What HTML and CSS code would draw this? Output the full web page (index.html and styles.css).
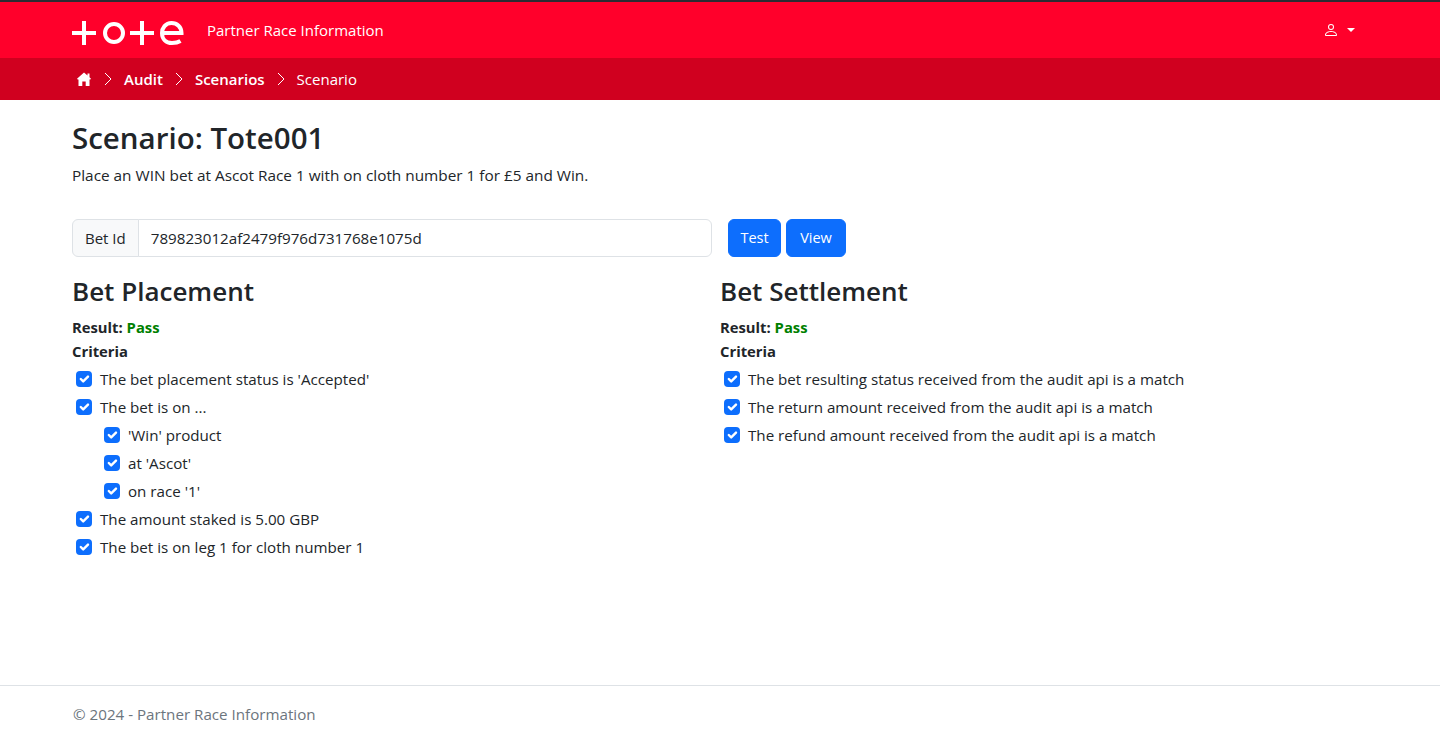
FILE: index.html
```html
<!DOCTYPE html>
<html lang="en">
<head>
  <meta charset="utf-8" />
  <meta name="viewport" content="width=device-width, initial-scale=1.0" />
  <title>Scenario - Partner Race Information</title>
  <link rel="stylesheet" href="styles.css">
</head>
<body>

  <header class="topbar">
    <div class="topbar-inner">
      <a class="brand" href="#">
        <svg class="logo" viewBox="0 0 112 24" width="112" height="24" aria-label="tote">
          <g fill="none" stroke="#fff" stroke-width="4">
            <path d="M0 12H24M12 0V24" />
            <circle cx="42" cy="12" r="9" />
            <path d="M58 12H82M70 0V24" />
            <path d="M89 12H109.500C109.500 6 105 2 99.500 2C93.500 2 90 7 90 12C90 18 94 22 100 22C103 22 106 21.500 108.500 20" />
          </g>
        </svg>
        <span class="brand-name">Partner Race Information</span>
      </a>
      <a class="user-menu" href="#">
        <svg viewBox="0 0 16 16" width="16" height="16" fill="#fff">
          <path d="M8 8a3 3 0 1 0 0-6 3 3 0 0 0 0 6zm2-3a2 2 0 1 1-4 0 2 2 0 0 1 4 0zm4 8c0 1-1 1-1 1H3s-1 0-1-1 1-4 6-4 6 3 6 4zm-1-.004c-.001-.246-.154-.986-.832-1.664C11.516 10.680 10.289 10 8 10c-2.290 0-3.516.68-4.168 1.332-.678.678-.83 1.418-.832 1.664h10z" />
        </svg>
        <span class="caret"></span>
      </a>
    </div>
  </header>

  <nav class="crumbs">
    <div class="crumbs-inner">
      <a href="#" class="crumb-home">
        <svg viewBox="0 0 14 14" width="14" height="14" fill="#fff">
          <path d="M7 0.500L10.500 3.500V1.500H12.500V5.300L14 6.700L13.300 7.500H12.500V14H8.700V9.500H5.300V14H1.500V7.500H0.700L0 6.700Z" />
        </svg>
      </a>
      <svg class="sep" viewBox="0 0 8 14" width="8" height="14"><path d="M1 1l6 6-6 6" fill="none" stroke="#fff" /></svg>
      <a href="#" class="crumb-link">Audit</a>
      <svg class="sep" viewBox="0 0 8 14" width="8" height="14"><path d="M1 1l6 6-6 6" fill="none" stroke="#fff" /></svg>
      <a href="#" class="crumb-link">Scenarios</a>
      <svg class="sep" viewBox="0 0 8 14" width="8" height="14"><path d="M1 1l6 6-6 6" fill="none" stroke="#fff" /></svg>
      <span class="crumb-current">Scenario</span>
    </div>
  </nav>

  <main class="container">
    <h1>Scenario: Tote001</h1>
    <p class="lead">Place an WIN bet at Ascot Race 1 with on cloth number 1 for £5 and Win.</p>

    <div class="bet-form">
      <div class="input-group">
        <span class="input-label">Bet Id</span>
        <input class="input-text" type="text" value="789823012af2479f976d731768e1075d" />
      </div>
      <div class="actions">
        <button class="btn btn-test">Test</button>
        <button class="btn btn-view">View</button>
      </div>
    </div>

    <div class="columns">
      <section>
        <h2>Bet Placement</h2>
        <div class="result">Result: <span class="pass">Pass</span></div>
        <div class="criteria-title">Criteria</div>
        <ul class="checks">
          <li><span class="check"></span>The bet placement status is 'Accepted'</li>
          <li><span class="check"></span>The bet is on ...</li>
          <li class="sub"><span class="check"></span>'Win' product</li>
          <li class="sub"><span class="check"></span>at 'Ascot'</li>
          <li class="sub"><span class="check"></span>on race '1'</li>
          <li><span class="check"></span>The amount staked is 5.00 GBP</li>
          <li><span class="check"></span>The bet is on leg 1 for cloth number 1</li>
        </ul>
      </section>
      <section>
        <h2>Bet Settlement</h2>
        <div class="result">Result: <span class="pass">Pass</span></div>
        <div class="criteria-title">Criteria</div>
        <ul class="checks">
          <li><span class="check"></span>The bet resulting status received from the audit api is a match</li>
          <li><span class="check"></span>The return amount received from the audit api is a match</li>
          <li><span class="check"></span>The refund amount received from the audit api is a match</li>
        </ul>
      </section>
    </div>
  </main>

  <footer>
    <div class="footer-inner">© 2024 - Partner Race Information</div>
  </footer>

</body>
</html>
```

FILE: styles.css
```css
* {
  box-sizing: border-box;
}

body {
  margin: 0;
  height: 741px;
  overflow: hidden;
  display: flex;
  flex-direction: column;
  font-family: "Open Sans", "Noto Sans", sans-serif;
  font-size: 15.170px;
  line-height: 24px;
  color: #212529;
  background: #fff;
}

a {
  color: #fff;
  text-decoration: none;
}

.topbar {
  height: 58px;
  background: #ff002b;
  border-top: 2px solid #2b2b33;
}

.topbar-inner {
  height: 100%;
  padding: 0 72px;
  display: flex;
  align-items: center;
  justify-content: space-between;
}

.brand {
  display: flex;
  align-items: center;
  gap: 23px;
}

.logo {
  display: block;
  margin-top: 6px;
}

.brand-name {
  font-size: 15px;
}

.user-menu {
  display: flex;
  align-items: center;
  gap: 8px;
  margin-right: 13px;
}

.caret {
  width: 0;
  height: 0;
  border-top: 4.800px solid #fff;
  border-left: 4.800px solid transparent;
  border-right: 4.800px solid transparent;
}

.crumbs {
  height: 42px;
  background: #d0001f;
}

.crumbs-inner {
  height: 100%;
  padding: 0 77px;
  display: flex;
  align-items: center;
  gap: 12px;
  color: #fff;
  font-size: 15px;
}

.crumb-home {
  display: flex;
  margin-right: 1px;
}

.crumb-link {
  font-weight: 600;
}

.container {
  flex: 1;
  padding: 0 72px;
}

h1 {
  margin: 18px 0 0;
  font-size: 29.500px;
  line-height: 40px;
  font-weight: 600;
}

.lead {
  margin: 5px 0 0;
  font-size: 15.350px;
}

.bet-form {
  margin-top: 32px;
  display: flex;
  gap: 16px;
}

.input-group {
  width: 640px;
  height: 38px;
  display: flex;
}

.input-label {
  padding: 6px 12px;
  background: #f8f9fa;
  border: 1px solid #dee2e6;
  border-radius: 6px 0 0 6px;
  font-size: 15px;
}

.input-text {
  flex: 1;
  min-width: 0;
  padding: 6px 12px;
  margin-left: -1px;
  font: inherit;
  color: #212529;
  border: 1px solid #dee2e6;
  border-radius: 0 6px 6px 0;
}

.actions {
  display: flex;
  gap: 5px;
}

.btn {
  height: 38px;
  padding: 0;
  font: inherit;
  font-size: 14.500px;
  color: #fff;
  background: #0d6efd;
  border: 1px solid #0d6efd;
  border-radius: 6px;
}

.btn-test {
  width: 53px;
}

.btn-view {
  width: 60px;
}

.columns {
  margin-top: 14px;
  display: grid;
  grid-template-columns: 648px 1fr;
}

h2 {
  margin: 0 0 4px;
  font-size: 26px;
  line-height: 40px;
  font-weight: 600;
}

.result,
.criteria-title {
  font-weight: 700;
  font-size: 14.800px;
}

.pass {
  color: green;
}

.checks {
  list-style: none;
  margin: 2px 0 0;
  padding: 0;
}

.checks li {
  height: 28px;
  padding-left: 4px;
  display: flex;
  align-items: center;
  gap: 8px;
}

.checks li.sub {
  padding-left: 32px;
}

.check {
  flex: none;
  width: 16px;
  height: 16px;
  border-radius: 4px;
  background-color: #0d6efd;
  background-image: url("data:image/svg+xml,%3csvg xmlns='http://www.w3.org/2000/svg' viewBox='0 0 20 20'%3e%3cpath fill='none' stroke='%23fff' stroke-linecap='round' stroke-linejoin='round' stroke-width='3' d='m6 10 3 3 6-6'/%3e%3c/svg%3e");
}

footer {
  height: 56px;
  border-top: 1px solid #dee2e6;
  color: #6c757d;
}

.footer-inner {
  padding: 16px 73px 0;
}
```
